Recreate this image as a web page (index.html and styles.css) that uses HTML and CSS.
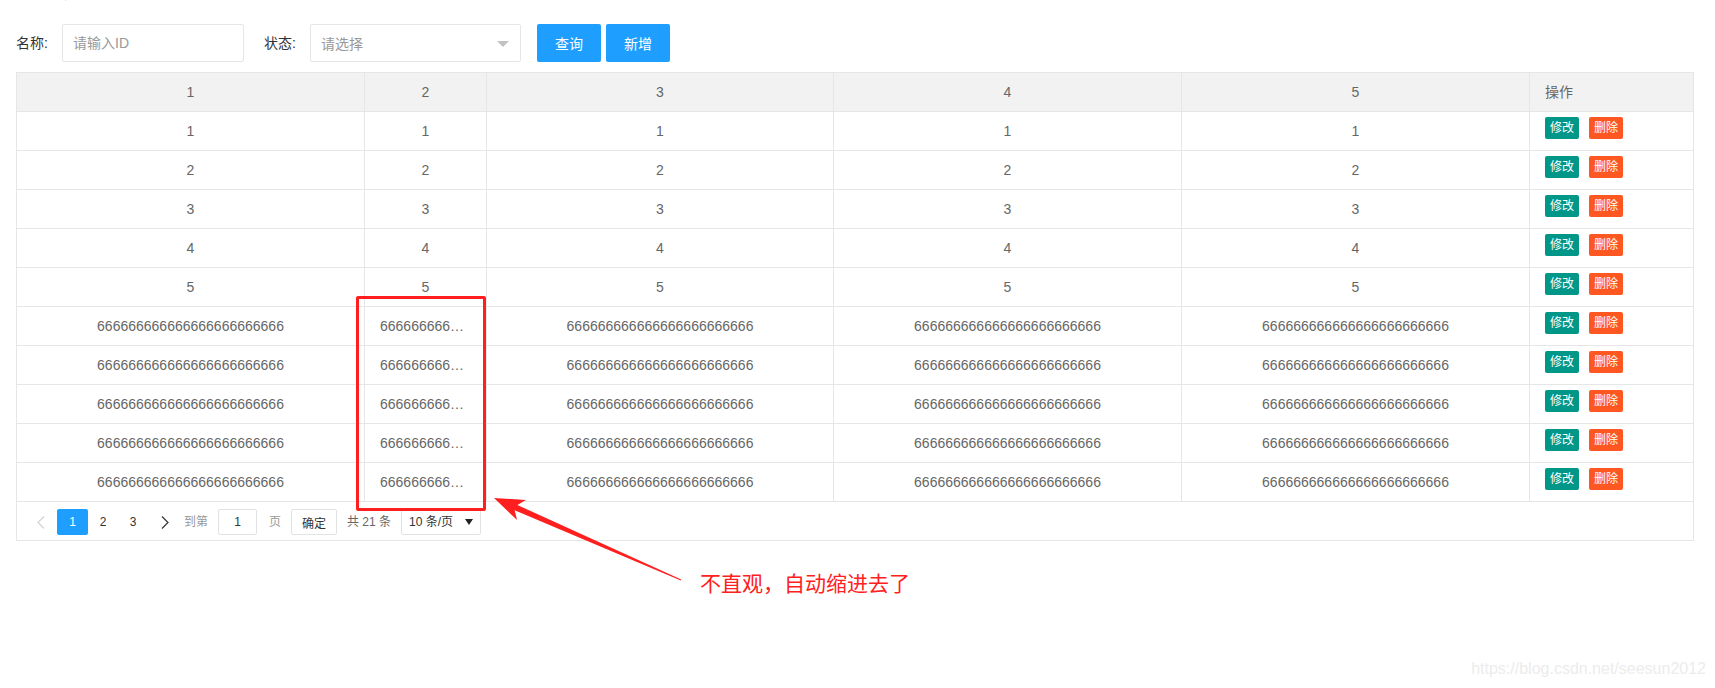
FILE: index.html
```html
<!DOCTYPE html>
<html lang="zh-CN">

<head>
    <meta charset="UTF-8" />
    <meta name="viewport" content="width=device-width, initial-scale=1.0" />
    <title>表格列宽自适应</title>
    <link rel="stylesheet" href="styles.css">
</head>

<body>
    <div class="page">
        <div class="page-title">表格列宽自动缩进问题</div>

        <!-- 搜索条件 -->
        <form class="search-bar">
            <label class="search-label" for="nameInput">名称:</label>
            <input class="search-input" id="nameInput" type="text" placeholder="请输入ID" />
            <label class="search-label">状态:</label>
            <div class="search-select">
                <span class="select-text">请选择</span>
                <i class="select-edge"></i>
            </div>
            <button type="button" class="btn btn-normal">查询</button>
            <button type="button" class="btn btn-normal">新增</button>
        </form>

        <!-- 数据表格 -->
        <div class="table-box">
            <table class="data-table">
                <colgroup>
                    <col class="col-wide" />
                    <col class="col-narrow" />
                    <col class="col-mid" />
                    <col class="col-wide" />
                    <col class="col-wide" />
                    <col class="col-tool" />
                </colgroup>
                <thead>
                    <tr>
                        <th><div class="cell">1</div></th>
                        <th><div class="cell">2</div></th>
                        <th><div class="cell">3</div></th>
                        <th><div class="cell">4</div></th>
                        <th><div class="cell">5</div></th>
                        <th class="left"><div class="cell">操作</div></th>
                    </tr>
                </thead>
                <tbody>
                    <tr>
                        <td><div class="cell">1</div></td>
                        <td><div class="cell">1</div></td>
                        <td><div class="cell">1</div></td>
                        <td><div class="cell">1</div></td>
                        <td><div class="cell">1</div></td>
                        <td class="left"><div class="cell tools"><a class="btn-xs edit">修改</a><a class="btn-xs danger">删除</a></div></td>
                    </tr>
                    <tr>
                        <td><div class="cell">2</div></td>
                        <td><div class="cell">2</div></td>
                        <td><div class="cell">2</div></td>
                        <td><div class="cell">2</div></td>
                        <td><div class="cell">2</div></td>
                        <td class="left"><div class="cell tools"><a class="btn-xs edit">修改</a><a class="btn-xs danger">删除</a></div></td>
                    </tr>
                    <tr>
                        <td><div class="cell">3</div></td>
                        <td><div class="cell">3</div></td>
                        <td><div class="cell">3</div></td>
                        <td><div class="cell">3</div></td>
                        <td><div class="cell">3</div></td>
                        <td class="left"><div class="cell tools"><a class="btn-xs edit">修改</a><a class="btn-xs danger">删除</a></div></td>
                    </tr>
                    <tr>
                        <td><div class="cell">4</div></td>
                        <td><div class="cell">4</div></td>
                        <td><div class="cell">4</div></td>
                        <td><div class="cell">4</div></td>
                        <td><div class="cell">4</div></td>
                        <td class="left"><div class="cell tools"><a class="btn-xs edit">修改</a><a class="btn-xs danger">删除</a></div></td>
                    </tr>
                    <tr>
                        <td><div class="cell">5</div></td>
                        <td><div class="cell">5</div></td>
                        <td><div class="cell">5</div></td>
                        <td><div class="cell">5</div></td>
                        <td><div class="cell">5</div></td>
                        <td class="left"><div class="cell tools"><a class="btn-xs edit">修改</a><a class="btn-xs danger">删除</a></div></td>
                    </tr>
                    <tr>
                        <td><div class="cell">666666666666666666666666</div></td>
                        <td><div class="cell">666666666666666666666666</div></td>
                        <td><div class="cell">666666666666666666666666</div></td>
                        <td><div class="cell">666666666666666666666666</div></td>
                        <td><div class="cell">666666666666666666666666</div></td>
                        <td class="left"><div class="cell tools"><a class="btn-xs edit">修改</a><a class="btn-xs danger">删除</a></div></td>
                    </tr>
                    <tr>
                        <td><div class="cell">666666666666666666666666</div></td>
                        <td><div class="cell">666666666666666666666666</div></td>
                        <td><div class="cell">666666666666666666666666</div></td>
                        <td><div class="cell">666666666666666666666666</div></td>
                        <td><div class="cell">666666666666666666666666</div></td>
                        <td class="left"><div class="cell tools"><a class="btn-xs edit">修改</a><a class="btn-xs danger">删除</a></div></td>
                    </tr>
                    <tr>
                        <td><div class="cell">666666666666666666666666</div></td>
                        <td><div class="cell">666666666666666666666666</div></td>
                        <td><div class="cell">666666666666666666666666</div></td>
                        <td><div class="cell">666666666666666666666666</div></td>
                        <td><div class="cell">666666666666666666666666</div></td>
                        <td class="left"><div class="cell tools"><a class="btn-xs edit">修改</a><a class="btn-xs danger">删除</a></div></td>
                    </tr>
                    <tr>
                        <td><div class="cell">666666666666666666666666</div></td>
                        <td><div class="cell">666666666666666666666666</div></td>
                        <td><div class="cell">666666666666666666666666</div></td>
                        <td><div class="cell">666666666666666666666666</div></td>
                        <td><div class="cell">666666666666666666666666</div></td>
                        <td class="left"><div class="cell tools"><a class="btn-xs edit">修改</a><a class="btn-xs danger">删除</a></div></td>
                    </tr>
                    <tr>
                        <td><div class="cell">666666666666666666666666</div></td>
                        <td><div class="cell">666666666666666666666666</div></td>
                        <td><div class="cell">666666666666666666666666</div></td>
                        <td><div class="cell">666666666666666666666666</div></td>
                        <td><div class="cell">666666666666666666666666</div></td>
                        <td class="left"><div class="cell tools"><a class="btn-xs edit">修改</a><a class="btn-xs danger">删除</a></div></td>
                    </tr>
                </tbody>
            </table>

            <!-- 分页 -->
            <div class="table-page">
                <a class="page-prev disabled">
                    <svg width="8" height="13" viewBox="0 0 8 13"><polyline points="7,0.5 1,6.5 7,12.5" /></svg>
                </a>
                <span class="page-num current">1</span>
                <a class="page-num">2</a>
                <a class="page-num">3</a>
                <a class="page-next">
                    <svg width="8" height="13" viewBox="0 0 8 13"><polyline points="1,0.5 7,6.5 1,12.5" /></svg>
                </a>
                <span class="page-skip">到第</span>
                <input class="page-input" type="text" value="1" />
                <span class="page-skip">页</span>
                <button type="button" class="page-btn">确定</button>
                <span class="page-count">共 21 条</span>
                <span class="page-limits">
                    <select>
                        <option selected>10 条/页</option>
                        <option>20 条/页</option>
                        <option>30 条/页</option>
                    </select>
                    <svg width="8" height="6" viewBox="0 0 8 6"><polygon points="0,0 8,0 4,6" /></svg>
                </span>
            </div>
        </div>
    </div>

    <!-- 截图标注 -->
    <div class="mark-box"></div>
    <svg class="mark-arrow" width="1715" height="688" viewBox="0 0 1715 688">
        <polygon points="494,498 525.9,499.9 517.4,505 681.2,579.4 680.8,580.6 514.6,510.2 517.1,520.1" />
    </svg>
    <div class="mark-text">不直观，自动缩进去了</div>

    <div class="watermark">https://blog.csdn.net/seesun2012</div>
</body>

</html>
```

FILE: styles.css
```css
/* General styling */
html,
body {
    margin: 0;
    height: 100%;
    overflow: hidden;
}

body {
    font-family: "Liberation Sans", "Noto Sans CJK SC", sans-serif;
    font-size: 14px;
    color: #666;
    background-color: #fff;
    position: relative;
}

.page {
    padding: 0 21px 0 16px;
}

.page-title {
    font-size: 16px;
    line-height: 20px;
    margin-top: -17px;
    color: #333;
}

/* Search bar */
.search-bar {
    display: flex;
    align-items: center;
    height: 38px;
    margin: 21px 0 10px;
}

.search-label {
    width: 46px;
    color: #333;
    line-height: 20px;
}

.search-input,
.search-select {
    height: 38px;
    box-sizing: border-box;
    border: 1px solid #e6e6e6;
    border-radius: 2px;
    background-color: #fff;
}

.search-input {
    width: 182px;
    margin-right: 20px;
    padding: 0 10px;
    font-family: inherit;
    font-size: 14px;
    color: #333;
    outline: none;
}

.search-input::placeholder {
    color: #999;
}

.search-select {
    width: 211px;
    margin-right: 16px;
    padding: 0 11px 0 10px;
    display: flex;
    align-items: center;
    justify-content: space-between;
}

.select-text {
    color: #999;
}

.select-edge {
    width: 0;
    height: 0;
    border-style: solid;
    border-width: 6px 6px 0;
    border-color: #c2c2c2 transparent transparent;
    margin-top: 2px;
}

.btn {
    height: 38px;
    padding: 0 18px;
    border: none;
    border-radius: 2px;
    font-family: inherit;
    font-size: 14px;
    color: #fff;
    cursor: pointer;
}

.btn + .btn {
    margin-left: 5px;
}

.btn-normal {
    background-color: #1e9fff;
}

/* Table */
.table-box {
    width: 1678px;
    box-sizing: border-box;
    border: 1px solid #e6e6e6;
}

.data-table {
    width: 1676px;
    table-layout: fixed;
    border-collapse: separate;
    border-spacing: 0;
}

.col-wide {
    width: 348px;
}

.col-narrow {
    width: 122px;
}

.col-mid {
    width: 347px;
}

.col-tool {
    width: 163px;
}

.data-table th,
.data-table td {
    padding: 5px 0;
    border-right: 1px solid #e6e6e6;
    border-bottom: 1px solid #e6e6e6;
    text-align: center;
    font-weight: normal;
}

.data-table th:last-child,
.data-table td:last-child {
    border-right: none;
}

.data-table th {
    background-color: #f2f2f2;
}

.data-table .left {
    text-align: left;
}

.cell {
    height: 28px;
    line-height: 28px;
    padding: 0 15px;
    overflow: hidden;
    text-overflow: ellipsis;
    white-space: nowrap;
}

.tools {
    display: flex;
    align-items: flex-start;
    gap: 10px;
}

.btn-xs {
    height: 22px;
    line-height: 22px;
    padding: 0 5px;
    border-radius: 2px;
    font-size: 12px;
    color: #fff;
    cursor: pointer;
}

.btn-xs.edit {
    background-color: #009688;
}

.btn-xs.danger {
    background-color: #ff5722;
}

/* Pagination */
.table-page {
    height: 38px;
    box-sizing: border-box;
    padding: 7px 7px 0;
    display: flex;
    align-items: flex-start;
    font-size: 12px;
}

.page-prev,
.page-next,
.page-num {
    height: 26px;
    display: inline-flex;
    align-items: center;
    justify-content: center;
    color: #333;
    cursor: pointer;
}

.page-prev {
    width: 33px;
}

.page-next {
    width: 34px;
}

.page-prev svg,
.page-next svg {
    fill: none;
    stroke: #333;
    stroke-width: 1.2;
}

.page-prev.disabled svg {
    stroke: #d2d2d2;
}

.page-num {
    width: 30px;
}

.page-num.current {
    width: 31px;
    border-radius: 2px;
    background-color: #1e9fff;
    color: #fff;
}

.page-skip {
    line-height: 26px;
    color: #999;
    margin-left: 2px;
}

.page-input,
.page-btn,
.page-limits {
    height: 26px;
    box-sizing: border-box;
    border: 1px solid #e2e2e2;
    border-radius: 2px;
    background-color: #fff;
    margin: 0 10px;
    font-family: inherit;
    font-size: 12px;
    color: #333;
}

.page-input {
    width: 39px;
    text-align: center;
    outline: none;
    padding: 0;
}

.page-btn {
    width: 46px;
    padding: 0;
}

.page-count {
    line-height: 26px;
    color: #666;
}

.page-limits {
    width: 80px;
    display: inline-flex;
    align-items: center;
    padding-right: 7px;
}

.page-limits select {
    flex: 1;
    appearance: none;
    border: none;
    background: transparent;
    padding: 0 0 0 7px;
    font-family: inherit;
    font-size: 12px;
    color: #333;
    outline: none;
}

.page-limits svg {
    fill: #222;
}

/* Screenshot annotations */
.mark-box {
    position: absolute;
    left: 356px;
    top: 296px;
    width: 130px;
    height: 215px;
    box-sizing: border-box;
    border: 3px solid #ff1f1f;
    border-radius: 2px;
}

.mark-arrow {
    position: absolute;
    left: 0;
    top: 0;
    pointer-events: none;
}

.mark-arrow polygon {
    fill: #ff1f1f;
}

.mark-text {
    position: absolute;
    left: 700px;
    top: 572px;
    font-size: 21px;
    line-height: 24px;
    color: #ff2020;
    white-space: nowrap;
}

.watermark {
    position: absolute;
    right: 9px;
    top: 660px;
    font-size: 16px;
    line-height: 18px;
    color: #ececec;
}
```
